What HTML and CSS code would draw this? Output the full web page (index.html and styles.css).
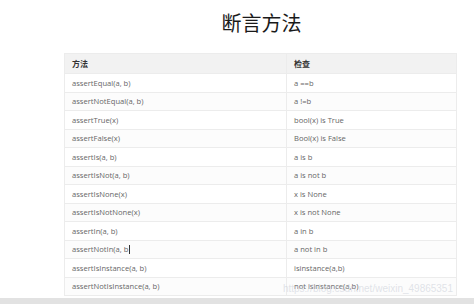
FILE: index.html
```html
<!DOCTYPE html>
<html>
<head>
<meta charset="utf-8">
<link rel="stylesheet" href="styles.css">
</head>
<body>
<div class="page">
  <h1 class="title">断言方法</h1>
  <div class="table-wrap">
    <table class="tbl">
      <thead>
        <tr><th class="c1">方法</th><th class="c2">检查</th></tr>
      </thead>
      <tbody>
        <tr><td>assertEqual(a, b)</td><td>a ==b</td></tr>
        <tr><td>assertNotEqual(a, b)</td><td>a !=b</td></tr>
        <tr><td>assertTrue(x)</td><td>bool(x) is True</td></tr>
        <tr><td>assertFalse(x)</td><td>Bool(x) is False</td></tr>
        <tr><td>assertIs(a, b)</td><td>a is b</td></tr>
        <tr><td>assertIsNot(a, b)</td><td>a is not b</td></tr>
        <tr><td>assertIsNone(x)</td><td>x is None</td></tr>
        <tr><td>assertIsNotNone(x)</td><td>x is not None</td></tr>
        <tr><td>assertIn(a, b)</td><td>a in b</td></tr>
        <tr><td>assertNotIn(a, b<span class="caret"></span></td><td>a not in b</td></tr>
        <tr><td>assertIsInstance(a, b)</td><td>isinstance(a,b)</td></tr>
        <tr><td>assertNotIsInstance(a, b)</td><td>not isinstance(a,b)</td></tr>
      </tbody>
    </table>
    <div class="watermark">https://blog.csdn.net/weixin_49865351</div>
  </div>
  <div class="bottom-bar"></div>
</div>
</body>
</html>
```
FILE: styles.css
```css
html, body {
  margin: 0;
  padding: 0;
  background: #ffffff;
}
.page {
  width: 474px;
  height: 304px;
  overflow: hidden;
  display: flex;
  flex-direction: column;
  font-family: "Open Sans", "Noto Sans CJK SC", sans-serif;
}
.title {
  margin: 0;
  padding: 10px 0 0 49px;
  height: 43px;
  box-sizing: border-box;
  text-align: center;
  font-family: "Noto Sans CJK SC", sans-serif;
  font-weight: 400;
  font-size: 20px;
  line-height: 26px;
  color: #1a1a1a;
}
.table-wrap {
  position: relative;
  margin: 10px 0 0 64px;
  width: 393px;
}
.tbl {
  width: 393px;
  border-collapse: collapse;
  table-layout: fixed;
  font-size: 7.6px;
  color: #666;
}
.tbl th, .tbl td {
  text-align: left;
  padding: 0 0 0 7px;
  border: 1px solid #ececec;
  white-space: nowrap;
}
.tbl th {
  height: 19px;
  background: #f2f2f2;
  color: #333;
  font-weight: 700;
  font-family: "Noto Sans CJK SC", sans-serif;
  font-size: 8px;
}
.tbl td {
  height: 17.5px;
}
.tbl tbody tr:nth-child(even) td {
  background: #fcfcfc;
}
.c1 { width: 214px; }
.caret {
  display: inline-block;
  width: 1px;
  height: 9px;
  background: #333;
  vertical-align: middle;
  margin-left: 1px;
}
.watermark {
  position: absolute;
  right: 4px;
  bottom: 2px;
  font-family: "Liberation Sans", sans-serif;
  font-size: 10px;
  color: rgba(200, 205, 215, 0.55);
}
.bottom-bar {
  margin-top: auto;
  height: 6px;
  background: #e2e2e2;
}
```
